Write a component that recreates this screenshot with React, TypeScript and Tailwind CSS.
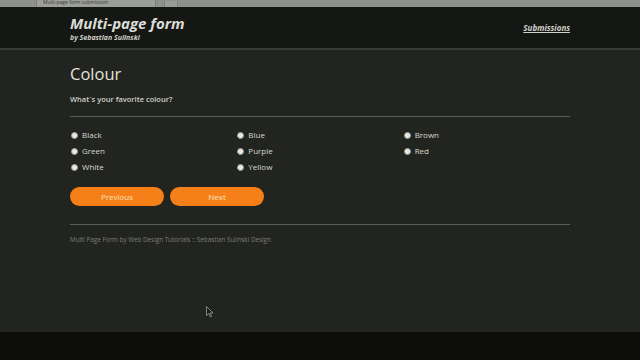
import React from 'react';

const colours = [
  ['Black', 'Blue', 'Brown'],
  ['Green', 'Purple', 'Red'],
  ['White', 'Yellow', ''],
];

const font = { fontFamily: '"Open Sans", "DejaVu Sans", sans-serif' };

const Radio = ({ label }: { label: string }) => (
  <label className="flex items-center gap-[4px] h-[16px] text-[8px] text-[#d8d8d2]">
    <span className="w-[7px] h-[7px] rounded-full bg-[#e8e8e4] border border-[#9a9a96]" />
    {label}
  </label>
);

export default function App() {
  return (
    <div className="w-[640px] h-[360px] overflow-hidden flex flex-col bg-[#22241f] relative" style={font}>
      {/* browser tab strip */}
      <div className="h-[7px] bg-[#8e908c] flex items-end shrink-0">
        <div className="ml-[36px] w-[120px] h-[7px] bg-[#9c9e9a] border-x border-[#7c7e7a] text-[5px] leading-[5px] text-[#3a3a3a] pl-[6px] overflow-hidden">
          Multi-page form submission
        </div>
        <div className="ml-[8px] w-[14px] h-[6px] bg-[#9a9c98] border-x border-[#7c7e7a]" />
      </div>

      {/* header */}
      <div className="h-[43px] bg-[#151714] border-b-2 border-[#3a3c37] shrink-0">
        <div className="w-[500px] mx-auto flex justify-between">
          <div className="pt-[7px]">
            <div className="text-[15px] leading-[18px] font-bold italic text-[#dcdcd6]">Multi-page form</div>
            <div className="text-[7px] leading-[10px] font-bold italic text-[#cfcfc9] mt-[1px]">by Sebastian Sulinski</div>
          </div>
          <a className="mt-[15px] text-[8px] font-bold italic underline text-[#d0d0ca]">Submissions</a>
        </div>
      </div>

      {/* body */}
      <div className="flex-1">
        <div className="w-[500px] mx-auto pt-[14px]">
          <h1 className="text-[16.5px] leading-[20px] font-medium text-[#e2e2dc]">Colour</h1>
          <p className="mt-[10px] text-[7.5px] font-semibold text-[#d0d0ca]">What´s your favorite colour?</p>
          <div className="mt-[11px] h-px bg-[#5a5c56]" />
          <div className="mt-[10px] pl-[1px] grid grid-cols-3">
            {colours.map((row) =>
              row.map((c, i) => (c ? <Radio key={c} label={c} /> : <div key={i} />))
            )}
          </div>
          <div className="mt-[12px] flex gap-[6px]">
            <button className="w-[94px] h-[19px] rounded-full bg-[#f5801a] text-[8px] text-[#fde0b8]">Previous</button>
            <button className="w-[94px] h-[19px] rounded-full bg-[#f5801a] text-[8px] text-[#fde0b8]">Next</button>
          </div>
          <div className="mt-[18px] h-px bg-[#5a5c56]" />
          <p className="mt-[10px] text-[6.3px] text-[#7d7f79]">
            Multi Page Form by Web Design Tutorials :: Sebastian Sulinski Design
          </p>
        </div>
      </div>

      {/* video caption band */}
      <div className="h-[28px] bg-[#0d0e0c] shrink-0" />

      {/* mouse cursor */}
      <svg className="absolute left-[206px] top-[306px]" width="8" height="12" viewBox="0 0 8 12">
        <path d="M0.5 0.5 L0.5 9.5 L2.8 7.4 L4.4 11 L5.6 10.4 L4.1 7 L7 7 Z" fill="#1a1c18" stroke="#9a9c98" strokeWidth="0.8" />
      </svg>
    </div>
  );
}
